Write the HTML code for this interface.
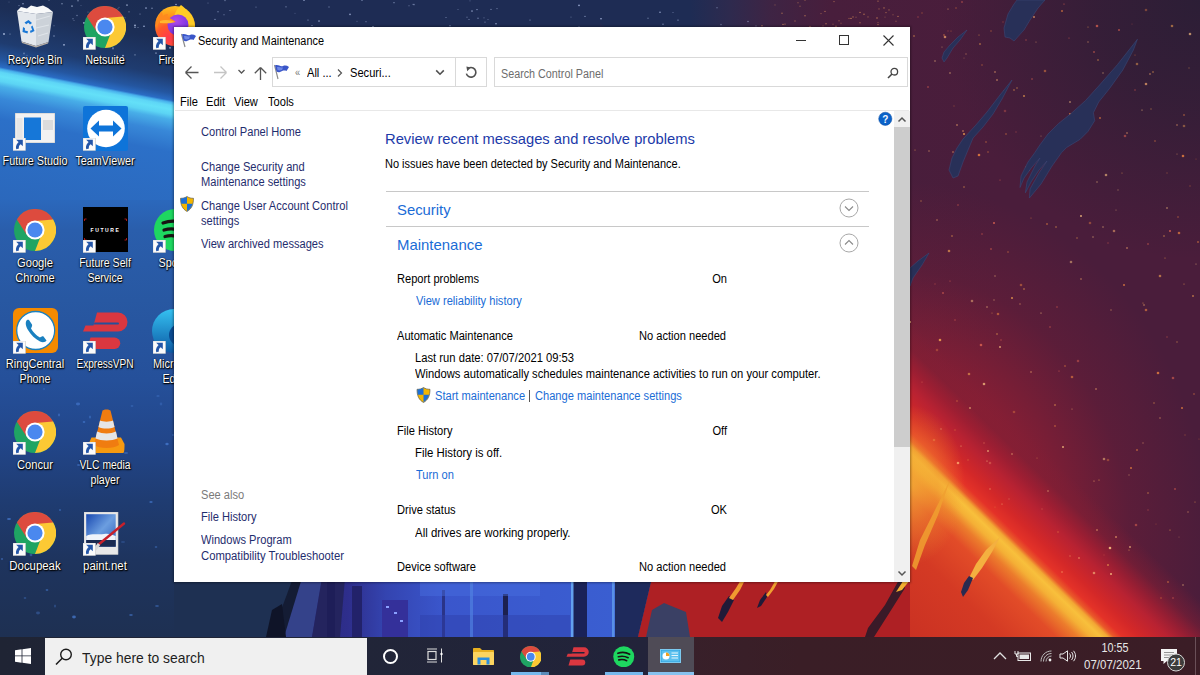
<!DOCTYPE html>
<html><head><meta charset="utf-8">
<style>
*{margin:0;padding:0;box-sizing:border-box}
html,body{width:1200px;height:675px;overflow:hidden}
body{position:relative;font-family:"Liberation Sans",sans-serif;font-size:12px;background:#1e2f55}
.a{position:absolute}
.t{position:absolute;white-space:nowrap;line-height:1}
/* wallpaper */
#wp{position:absolute;left:0;top:0;width:1200px;height:675px;overflow:hidden}
/* desktop labels */
.lbl{position:absolute;color:#fff;text-align:center;width:76px;line-height:16px;font-size:12px;text-shadow:0 0 2px #000,1px 1px 1px #000}
/* window */
#win{position:absolute;left:174px;top:27px;width:736px;height:555px;background:#fff;box-shadow:0 0 2px 1px rgba(0,0,0,.35)}
</style></head><body>
<div id="wp">
  <div class="a" style="left:0;top:0;width:1200px;height:637px;background:linear-gradient(90deg,#1e2c54 0,#1e2c54 690px,#2e2a4e 730px,#3e2444 770px,#481e3c 830px,#4a1d3b 1000px,#4a1d3b 1200px)"></div>
  <div class="a" style="left:0;top:0;width:1200px;height:637px;background:radial-gradient(circle 260px at 1200px 0,#2c1e36 0,rgba(44,30,54,.7) 40%,rgba(44,30,54,0) 100%)"></div>
  <div class="a" style="left:600px;top:0;width:600px;height:637px;background:radial-gradient(ellipse 320px 360px at 290px 540px,rgba(205,34,44,.85) 0,rgba(190,32,46,.55) 45%,rgba(160,30,50,.2) 75%,rgba(160,30,50,0) 100%)"></div>
  <div class="a" style="left:600px;top:0;width:600px;height:637px;background:linear-gradient(224deg,rgba(74,29,59,0) 0,rgba(74,29,59,0) 432px,rgba(130,30,52,.55) 452px,rgba(160,30,50,.85) 466px,#b82232 480px,#d42828 500px,#e43228 512px,#ea5a2a 518px,#f2a834 522px,#f8c03c 527px,#f4b036 534px,#ec7c2c 543px,#e24c28 558px,#d43a24 595px,#c42c22 700px,#b82420 875px)"></div>
  <div class="a" style="left:860px;top:400px;width:140px;height:200px;background:radial-gradient(ellipse 55px 80px at 50px 85px,rgba(246,184,56,.75) 0,rgba(240,150,48,.45) 50%,rgba(230,110,40,0) 100%)"></div>
  <!-- left blue column -->
  <div class="a" style="left:0;top:0;width:174px;height:637px;background:linear-gradient(180deg,#1b2c52 0,#2b68bc 200px,#2a5eac 230px,#2858a2 300px,#25509a 380px,#22468a 440px,#1f3c72 500px,#1e345e 560px,#1e3052 637px)"></div>
  <div class="a" style="left:0;top:0;width:174px;height:200px;background:linear-gradient(191deg,#1b2c52 0,#1c2e56 40px,#1f3c70 75px,#2456a0 92px,#2a6cc4 99px,#48b0ec 101px,#5ed6f6 104px,#64e0f8 108px,#5cd4f4 113px,#48aee8 118px,#3888d8 130px,#2c70c8 150px,#2b68bc 229px)"></div>
  <!-- stars -->
  <svg class="a" style="left:0;top:0" width="1200" height="637" viewBox="0 0 1200 637"><circle cx="1004" cy="91" r="0.6" fill="#f0a050" opacity="0.80"/><circle cx="937" cy="350" r="1.3" fill="#e88040" opacity="0.37"/><circle cx="1036" cy="42" r="0.6" fill="#ffb070" opacity="0.58"/><circle cx="1150" cy="74" r="0.7" fill="#ffb070" opacity="0.87"/><circle cx="1077" cy="238" r="0.7" fill="#f0a050" opacity="0.66"/><circle cx="949" cy="251" r="1.3" fill="#f0a050" opacity="0.66"/><circle cx="1072" cy="409" r="0.6" fill="#ffb070" opacity="0.66"/><circle cx="964" cy="58" r="0.6" fill="#ffb070" opacity="0.38"/><circle cx="970" cy="408" r="1.0" fill="#f8c080" opacity="0.61"/><circle cx="1178" cy="217" r="0.7" fill="#e88040" opacity="0.73"/><circle cx="981" cy="345" r="1.3" fill="#d86050" opacity="0.83"/><circle cx="1122" cy="173" r="0.6" fill="#f0a050" opacity="0.63"/><circle cx="958" cy="205" r="1.0" fill="#d86050" opacity="0.37"/><circle cx="1104" cy="459" r="1.3" fill="#f8c080" opacity="0.54"/><circle cx="1012" cy="298" r="1.0" fill="#f0a050" opacity="0.81"/><circle cx="1184" cy="284" r="0.6" fill="#f0a050" opacity="0.75"/><circle cx="1000" cy="347" r="1.0" fill="#f8c080" opacity="0.74"/><circle cx="1167" cy="208" r="1.0" fill="#f8c080" opacity="0.44"/><circle cx="944" cy="35" r="0.8" fill="#e88040" opacity="0.76"/><circle cx="1026" cy="167" r="0.7" fill="#d86050" opacity="0.83"/><circle cx="991" cy="249" r="0.8" fill="#d86050" opacity="0.88"/><circle cx="954" cy="106" r="0.7" fill="#e88040" opacity="0.36"/><circle cx="1151" cy="109" r="0.8" fill="#f0a050" opacity="0.43"/><circle cx="1065" cy="366" r="0.8" fill="#e88040" opacity="0.73"/><circle cx="1059" cy="371" r="0.6" fill="#d86050" opacity="0.84"/><circle cx="1136" cy="525" r="1.3" fill="#d86050" opacity="0.57"/><circle cx="1024" cy="289" r="1.0" fill="#f0a050" opacity="0.45"/><circle cx="1196" cy="264" r="0.6" fill="#f8c080" opacity="0.68"/><circle cx="940" cy="340" r="1.3" fill="#f0a050" opacity="0.87"/><circle cx="1088" cy="42" r="0.7" fill="#ffb070" opacity="0.56"/><circle cx="1094" cy="573" r="1.3" fill="#f8c080" opacity="0.61"/><circle cx="943" cy="293" r="1.0" fill="#d86050" opacity="0.62"/><circle cx="935" cy="61" r="0.8" fill="#f8c080" opacity="0.61"/><circle cx="1111" cy="310" r="0.7" fill="#ffb070" opacity="0.55"/><circle cx="1110" cy="548" r="1.3" fill="#f8c080" opacity="0.89"/><circle cx="1160" cy="418" r="0.8" fill="#ffb070" opacity="0.55"/><circle cx="958" cy="463" r="1.3" fill="#ffb070" opacity="0.78"/><circle cx="1006" cy="134" r="0.7" fill="#e88040" opacity="0.80"/><circle cx="1125" cy="136" r="1.3" fill="#d86050" opacity="0.55"/><circle cx="918" cy="17" r="0.8" fill="#d86050" opacity="0.49"/><circle cx="1111" cy="574" r="1.0" fill="#f8c080" opacity="0.88"/><circle cx="1016" cy="132" r="0.7" fill="#d86050" opacity="0.46"/><circle cx="969" cy="374" r="1.3" fill="#f0a050" opacity="0.61"/><circle cx="1099" cy="480" r="0.6" fill="#f0a050" opacity="0.85"/><circle cx="1137" cy="450" r="1.0" fill="#e88040" opacity="0.59"/><circle cx="1094" cy="52" r="1.0" fill="#d86050" opacity="0.57"/><circle cx="1185" cy="435" r="0.7" fill="#e88040" opacity="0.37"/><circle cx="1081" cy="279" r="0.7" fill="#ffb070" opacity="0.80"/><circle cx="1194" cy="394" r="0.8" fill="#e88040" opacity="0.65"/><circle cx="948" cy="9" r="0.6" fill="#ffb070" opacity="0.76"/><circle cx="972" cy="301" r="1.3" fill="#f8c080" opacity="0.49"/><circle cx="1032" cy="79" r="0.8" fill="#d86050" opacity="0.71"/><circle cx="1146" cy="310" r="1.3" fill="#e88040" opacity="0.64"/><circle cx="1062" cy="11" r="1.0" fill="#e88040" opacity="0.68"/><circle cx="1135" cy="90" r="0.7" fill="#d86050" opacity="0.69"/><circle cx="945" cy="37" r="1.3" fill="#ffb070" opacity="0.66"/><circle cx="1137" cy="64" r="1.3" fill="#f0a050" opacity="0.49"/><circle cx="990" cy="463" r="1.3" fill="#d86050" opacity="0.66"/><circle cx="1130" cy="547" r="1.0" fill="#f8c080" opacity="0.69"/><circle cx="1057" cy="307" r="0.8" fill="#d86050" opacity="0.63"/><circle cx="1144" cy="305" r="0.7" fill="#ffb070" opacity="0.83"/><circle cx="1183" cy="156" r="1.3" fill="#e88040" opacity="0.81"/><circle cx="950" cy="73" r="1.0" fill="#f8c080" opacity="0.39"/><circle cx="980" cy="44" r="0.8" fill="#f0a050" opacity="0.84"/><circle cx="955" cy="430" r="0.8" fill="#e88040" opacity="0.49"/><circle cx="950" cy="281" r="0.6" fill="#d86050" opacity="0.84"/><circle cx="957" cy="401" r="0.7" fill="#e88040" opacity="0.74"/><circle cx="1198" cy="242" r="1.0" fill="#e88040" opacity="0.55"/><circle cx="937" cy="220" r="0.8" fill="#ffb070" opacity="0.60"/><circle cx="1114" cy="231" r="1.3" fill="#ffb070" opacity="0.51"/><circle cx="1189" cy="68" r="0.7" fill="#f0a050" opacity="0.40"/><circle cx="1148" cy="510" r="0.8" fill="#d86050" opacity="0.43"/><circle cx="1177" cy="342" r="0.8" fill="#f0a050" opacity="0.50"/><circle cx="1142" cy="110" r="0.6" fill="#f8c080" opacity="0.87"/><circle cx="1094" cy="481" r="0.6" fill="#ffb070" opacity="0.82"/><circle cx="1070" cy="556" r="0.8" fill="#ffb070" opacity="0.42"/><circle cx="1063" cy="143" r="0.6" fill="#e88040" opacity="0.49"/><circle cx="994" cy="300" r="0.7" fill="#f8c080" opacity="0.54"/><circle cx="915" cy="150" r="0.6" fill="#f0a050" opacity="0.75"/><circle cx="1070" cy="114" r="1.0" fill="#e88040" opacity="0.86"/><circle cx="1168" cy="582" r="0.8" fill="#e88040" opacity="0.89"/><circle cx="1009" cy="499" r="0.7" fill="#d86050" opacity="0.89"/><circle cx="1195" cy="502" r="0.6" fill="#f0a050" opacity="0.69"/><circle cx="1165" cy="258" r="0.6" fill="#f0a050" opacity="0.72"/><circle cx="1020" cy="304" r="0.8" fill="#ffb070" opacity="0.48"/><circle cx="995" cy="276" r="0.7" fill="#f8c080" opacity="0.60"/><circle cx="1190" cy="186" r="0.8" fill="#e88040" opacity="0.35"/><circle cx="1021" cy="285" r="1.3" fill="#e88040" opacity="0.49"/><circle cx="1135" cy="55" r="0.6" fill="#e88040" opacity="0.57"/><circle cx="922" cy="13" r="0.8" fill="#e88040" opacity="0.40"/><circle cx="1188" cy="512" r="0.7" fill="#ffb070" opacity="0.56"/><circle cx="1097" cy="26" r="1.3" fill="#d86050" opacity="0.75"/><circle cx="1146" cy="84" r="1.3" fill="#ffb070" opacity="0.66"/><circle cx="1146" cy="10" r="1.3" fill="#e88040" opacity="0.40"/><circle cx="922" cy="382" r="0.6" fill="#d86050" opacity="0.81"/><circle cx="1072" cy="377" r="1.3" fill="#e88040" opacity="0.62"/><circle cx="1063" cy="447" r="1.0" fill="#f8c080" opacity="0.80"/><circle cx="1155" cy="141" r="0.7" fill="#e88040" opacity="0.76"/><circle cx="1193" cy="296" r="1.0" fill="#f0a050" opacity="0.61"/><circle cx="1108" cy="460" r="1.3" fill="#e88040" opacity="0.39"/><circle cx="953" cy="152" r="0.8" fill="#ffb070" opacity="0.66"/><circle cx="914" cy="36" r="0.8" fill="#f0a050" opacity="0.73"/><circle cx="1106" cy="175" r="1.3" fill="#f8c080" opacity="0.61"/><circle cx="1045" cy="71" r="1.3" fill="#e88040" opacity="0.52"/><circle cx="935" cy="284" r="0.8" fill="#d86050" opacity="0.39"/><circle cx="1184" cy="126" r="1.3" fill="#f0a050" opacity="0.43"/><circle cx="1062" cy="572" r="0.7" fill="#ffb070" opacity="0.80"/><circle cx="1058" cy="532" r="0.8" fill="#e88040" opacity="0.62"/><circle cx="1164" cy="236" r="0.7" fill="#f0a050" opacity="0.87"/><circle cx="1108" cy="243" r="0.7" fill="#d86050" opacity="0.54"/><circle cx="1002" cy="504" r="0.6" fill="#f8c080" opacity="0.76"/><circle cx="1153" cy="72" r="0.7" fill="#f0a050" opacity="0.85"/><circle cx="994" cy="223" r="1.0" fill="#d86050" opacity="0.90"/><circle cx="1081" cy="216" r="1.0" fill="#f8c080" opacity="0.82"/><circle cx="991" cy="31" r="0.8" fill="#e88040" opacity="0.49"/><circle cx="987" cy="307" r="0.7" fill="#f8c080" opacity="0.78"/><circle cx="1034" cy="17" r="1.0" fill="#ffb070" opacity="0.65"/><circle cx="1119" cy="30" r="1.0" fill="#d86050" opacity="0.69"/><circle cx="1070" cy="102" r="1.0" fill="#f8c080" opacity="0.50"/><circle cx="984" cy="443" r="0.8" fill="#d86050" opacity="0.71"/><circle cx="997" cy="334" r="1.0" fill="#f0a050" opacity="0.44"/><circle cx="957" cy="125" r="1.0" fill="#ffb070" opacity="0.47"/><circle cx="1173" cy="598" r="1.0" fill="#d86050" opacity="0.43"/><circle cx="966" cy="54" r="0.8" fill="#ffb070" opacity="0.40"/><circle cx="979" cy="155" r="1.3" fill="#e88040" opacity="0.84"/><circle cx="1127" cy="248" r="1.0" fill="#ffb070" opacity="0.47"/><circle cx="988" cy="451" r="1.0" fill="#f8c080" opacity="0.67"/><circle cx="1014" cy="412" r="1.3" fill="#e88040" opacity="0.40"/><circle cx="1170" cy="231" r="1.0" fill="#d86050" opacity="0.87"/><circle cx="1156" cy="524" r="0.6" fill="#e88040" opacity="0.37"/><circle cx="1116" cy="537" r="1.0" fill="#ffb070" opacity="0.62"/><circle cx="982" cy="65" r="0.7" fill="#e88040" opacity="0.64"/><circle cx="1108" cy="565" r="1.0" fill="#f0a050" opacity="0.65"/><circle cx="1097" cy="182" r="0.7" fill="#f8c080" opacity="0.64"/><circle cx="1037" cy="458" r="0.6" fill="#f0a050" opacity="0.52"/><circle cx="1184" cy="115" r="0.8" fill="#e88040" opacity="0.78"/><circle cx="910" cy="322" r="1.0" fill="#f8c080" opacity="0.88"/><circle cx="1097" cy="530" r="1.0" fill="#ffb070" opacity="0.48"/><circle cx="1055" cy="405" r="1.0" fill="#f0a050" opacity="0.49"/><circle cx="1104" cy="555" r="0.7" fill="#d86050" opacity="0.37"/><circle cx="1008" cy="252" r="1.0" fill="#e88040" opacity="0.35"/><circle cx="995" cy="507" r="0.6" fill="#e88040" opacity="0.62"/><circle cx="968" cy="460" r="0.7" fill="#e88040" opacity="0.61"/><circle cx="964" cy="134" r="1.0" fill="#f0a050" opacity="0.87"/><circle cx="952" cy="236" r="0.7" fill="#f0a050" opacity="0.89"/><circle cx="951" cy="31" r="0.6" fill="#e88040" opacity="0.57"/><circle cx="1170" cy="530" r="0.6" fill="#f0a050" opacity="0.86"/><circle cx="1005" cy="111" r="1.3" fill="#d86050" opacity="0.37"/><circle cx="1103" cy="227" r="0.8" fill="#f8c080" opacity="0.59"/><circle cx="942" cy="47" r="0.6" fill="#f8c080" opacity="0.58"/><circle cx="1167" cy="337" r="0.7" fill="#d86050" opacity="0.55"/><circle cx="1148" cy="493" r="1.0" fill="#f0a050" opacity="0.38"/><circle cx="1047" cy="224" r="1.0" fill="#e88040" opacity="0.53"/><circle cx="1124" cy="285" r="1.0" fill="#e88040" opacity="0.80"/><circle cx="1132" cy="24" r="0.6" fill="#d86050" opacity="0.38"/><circle cx="1177" cy="154" r="0.6" fill="#ffb070" opacity="0.54"/><circle cx="1118" cy="190" r="0.8" fill="#f8c080" opacity="0.35"/><circle cx="1129" cy="550" r="0.6" fill="#f0a050" opacity="0.80"/><circle cx="941" cy="429" r="1.0" fill="#d86050" opacity="0.78"/><circle cx="1175" cy="489" r="0.7" fill="#d86050" opacity="0.45"/><circle cx="1143" cy="443" r="0.7" fill="#ffb070" opacity="0.48"/><circle cx="1160" cy="276" r="1.3" fill="#f0a050" opacity="0.63"/><circle cx="1024" cy="96" r="1.0" fill="#f0a050" opacity="0.71"/><circle cx="1050" cy="327" r="0.7" fill="#d86050" opacity="0.84"/><circle cx="1196" cy="159" r="0.6" fill="#e88040" opacity="0.40"/><circle cx="1055" cy="426" r="1.0" fill="#e88040" opacity="0.48"/><circle cx="1031" cy="372" r="0.7" fill="#ffb070" opacity="0.82"/><circle cx="1103" cy="73" r="0.8" fill="#f8c080" opacity="0.50"/><circle cx="988" cy="152" r="0.8" fill="#e88040" opacity="0.59"/><circle cx="964" cy="141" r="0.8" fill="#ffb070" opacity="0.45"/><circle cx="929" cy="151" r="0.7" fill="#ffb070" opacity="0.64"/><circle cx="1098" cy="60" r="1.0" fill="#f0a050" opacity="0.41"/><circle cx="1048" cy="491" r="1.0" fill="#f8c080" opacity="0.37"/><circle cx="995" cy="72" r="0.7" fill="#ffb070" opacity="0.89"/><circle cx="1079" cy="558" r="0.8" fill="#ffb070" opacity="0.83"/><circle cx="1040" cy="156" r="0.6" fill="#f0a050" opacity="0.70"/><circle cx="1116" cy="210" r="0.6" fill="#f8c080" opacity="0.54"/><circle cx="1175" cy="489" r="0.8" fill="#d86050" opacity="0.72"/><circle cx="964" cy="187" r="0.7" fill="#f0a050" opacity="0.79"/><circle cx="1069" cy="38" r="0.6" fill="#d86050" opacity="0.72"/><circle cx="955" cy="320" r="0.7" fill="#d86050" opacity="0.73"/><circle cx="1029" cy="170" r="0.8" fill="#d86050" opacity="0.87"/><circle cx="1001" cy="340" r="0.8" fill="#d86050" opacity="0.58"/><circle cx="1161" cy="598" r="0.8" fill="#e88040" opacity="0.56"/><circle cx="1148" cy="244" r="0.8" fill="#d86050" opacity="0.78"/><circle cx="948" cy="31" r="0.7" fill="#d86050" opacity="0.40"/><circle cx="1090" cy="223" r="1.3" fill="#e88040" opacity="0.43"/><circle cx="992" cy="313" r="0.6" fill="#f0a050" opacity="0.56"/><circle cx="1129" cy="475" r="0.7" fill="#f8c080" opacity="0.42"/><circle cx="1183" cy="585" r="1.0" fill="#f8c080" opacity="0.38"/><circle cx="1179" cy="233" r="1.3" fill="#e88040" opacity="0.70"/><circle cx="1158" cy="373" r="1.3" fill="#e88040" opacity="0.81"/><circle cx="963" cy="131" r="1.0" fill="#ffb070" opacity="0.44"/><circle cx="1014" cy="90" r="0.7" fill="#f0a050" opacity="0.84"/><circle cx="1154" cy="403" r="0.8" fill="#f0a050" opacity="0.56"/><circle cx="1042" cy="509" r="0.8" fill="#d86050" opacity="0.52"/><circle cx="982" cy="234" r="0.8" fill="#d86050" opacity="0.63"/><circle cx="962" cy="2" r="1.0" fill="#d86050" opacity="0.48"/><circle cx="1131" cy="468" r="1.0" fill="#e88040" opacity="0.80"/><circle cx="1026" cy="40" r="0.8" fill="#d86050" opacity="0.55"/><circle cx="1143" cy="303" r="0.6" fill="#f0a050" opacity="0.70"/><circle cx="934" cy="440" r="1.3" fill="#f0a050" opacity="0.38"/><circle cx="1056" cy="227" r="0.7" fill="#f0a050" opacity="0.82"/><circle cx="1199" cy="439" r="0.6" fill="#e88040" opacity="0.42"/><circle cx="1167" cy="173" r="0.7" fill="#e88040" opacity="0.39"/><circle cx="1012" cy="454" r="0.7" fill="#f8c080" opacity="0.84"/><circle cx="990" cy="489" r="0.7" fill="#f8c080" opacity="0.63"/><circle cx="1177" cy="125" r="0.8" fill="#ffb070" opacity="0.63"/><circle cx="1003" cy="22" r="0.7" fill="#d86050" opacity="0.44"/><circle cx="1182" cy="408" r="1.0" fill="#e88040" opacity="0.79"/><circle cx="987" cy="461" r="0.6" fill="#f8c080" opacity="0.88"/><circle cx="1041" cy="313" r="0.6" fill="#f8c080" opacity="0.90"/><circle cx="1093" cy="237" r="0.8" fill="#f8c080" opacity="0.56"/><circle cx="1017" cy="88" r="0.8" fill="#f0a050" opacity="0.59"/><circle cx="961" cy="446" r="0.6" fill="#f8c080" opacity="0.80"/><circle cx="984" cy="384" r="1.3" fill="#f8c080" opacity="0.75"/><circle cx="1127" cy="133" r="0.8" fill="#ffb070" opacity="0.69"/><circle cx="1031" cy="218" r="0.6" fill="#e88040" opacity="0.62"/><circle cx="1088" cy="27" r="0.6" fill="#f0a050" opacity="0.66"/><circle cx="998" cy="314" r="1.3" fill="#e88040" opacity="0.58"/><circle cx="997" cy="80" r="0.8" fill="#ffb070" opacity="0.81"/><circle cx="956" cy="8" r="0.7" fill="#e88040" opacity="0.60"/><circle cx="928" cy="87" r="0.8" fill="#d86050" opacity="0.80"/><circle cx="1190" cy="34" r="1.3" fill="#f8c080" opacity="0.68"/><circle cx="1078" cy="361" r="1.3" fill="#d86050" opacity="0.49"/><circle cx="1172" cy="26" r="1.3" fill="#f0a050" opacity="0.57"/><circle cx="979" cy="35" r="0.6" fill="#f0a050" opacity="0.69"/><circle cx="1100" cy="118" r="1.0" fill="#e88040" opacity="0.64"/><circle cx="1096" cy="389" r="1.0" fill="#ffb070" opacity="0.45"/><circle cx="1000" cy="180" r="0.6" fill="#d86050" opacity="0.74"/><circle cx="1041" cy="136" r="0.6" fill="#f8c080" opacity="0.48"/><circle cx="921" cy="201" r="0.8" fill="#f0a050" opacity="0.50"/><circle cx="1071" cy="262" r="1.3" fill="#f8c080" opacity="0.51"/><circle cx="1179" cy="537" r="0.6" fill="#ffb070" opacity="0.36"/><circle cx="986" cy="142" r="0.7" fill="#e88040" opacity="0.76"/><circle cx="1173" cy="378" r="1.3" fill="#d86050" opacity="0.61"/><circle cx="1064" cy="4" r="0.6" fill="#d86050" opacity="0.88"/><circle cx="23" cy="3.7" r="0.8" fill="#c8d8ff" opacity="0.62"/><circle cx="530" cy="19.9" r="0.5" fill="#c8d8ff" opacity="0.73"/><circle cx="579" cy="5.4" r="0.8" fill="#c8d8ff" opacity="0.75"/><circle cx="50" cy="23.4" r="0.8" fill="#c8d8ff" opacity="0.77"/><circle cx="81" cy="5.6" r="0.5" fill="#c8d8ff" opacity="0.32"/><circle cx="721" cy="24.6" r="0.8" fill="#c8d8ff" opacity="0.34"/><circle cx="571" cy="17.1" r="0.6" fill="#c8d8ff" opacity="0.35"/><circle cx="74" cy="20.4" r="0.5" fill="#c8d8ff" opacity="0.45"/><circle cx="256" cy="7.1" r="0.6" fill="#c8d8ff" opacity="0.43"/><circle cx="215" cy="19.3" r="0.6" fill="#c8d8ff" opacity="0.76"/><circle cx="585" cy="16.3" r="0.6" fill="#c8d8ff" opacity="0.73"/><circle cx="470" cy="0.8" r="0.6" fill="#c8d8ff" opacity="0.32"/><circle cx="394" cy="2.7" r="0.6" fill="#c8d8ff" opacity="0.65"/><circle cx="409" cy="5.8" r="0.5" fill="#c8d8ff" opacity="0.59"/><circle cx="218" cy="11.8" r="0.8" fill="#c8d8ff" opacity="0.40"/><circle cx="579" cy="26.4" r="0.5" fill="#c8d8ff" opacity="0.47"/><circle cx="73" cy="18.8" r="0.5" fill="#c8d8ff" opacity="0.78"/><circle cx="450" cy="25.8" r="0.8" fill="#c8d8ff" opacity="0.43"/><circle cx="717" cy="7.7" r="0.5" fill="#c8d8ff" opacity="0.77"/><circle cx="176" cy="4.5" r="0.8" fill="#c8d8ff" opacity="0.68"/><circle cx="373" cy="26.8" r="0.8" fill="#c8d8ff" opacity="0.69"/><circle cx="477" cy="9.6" r="0.6" fill="#c8d8ff" opacity="0.76"/><circle cx="678" cy="20.1" r="0.6" fill="#c8d8ff" opacity="0.74"/><circle cx="19" cy="5.6" r="0.6" fill="#c8d8ff" opacity="0.51"/><circle cx="414" cy="4.6" r="0.8" fill="#c8d8ff" opacity="0.42"/><circle cx="350" cy="14.4" r="0.8" fill="#c8d8ff" opacity="0.68"/><circle cx="491" cy="9.4" r="0.6" fill="#c8d8ff" opacity="0.56"/><circle cx="660" cy="12.2" r="0.8" fill="#c8d8ff" opacity="0.67"/><circle cx="129" cy="11.8" r="0.6" fill="#c8d8ff" opacity="0.59"/><circle cx="96" cy="12.5" r="0.8" fill="#c8d8ff" opacity="0.42"/><circle cx="146" cy="8.1" r="0.8" fill="#c8d8ff" opacity="0.71"/><circle cx="469" cy="19.5" r="0.5" fill="#c8d8ff" opacity="0.66"/><circle cx="458" cy="9.4" r="0.5" fill="#c8d8ff" opacity="0.46"/><circle cx="144" cy="26.3" r="0.8" fill="#c8d8ff" opacity="0.80"/><circle cx="125" cy="17.8" r="0.5" fill="#c8d8ff" opacity="0.49"/><circle cx="748" cy="21.5" r="0.8" fill="#c8d8ff" opacity="0.45"/><circle cx="208" cy="3.0" r="0.5" fill="#c8d8ff" opacity="0.44"/><circle cx="673" cy="12.5" r="0.5" fill="#c8d8ff" opacity="0.50"/><circle cx="601" cy="18.7" r="0.8" fill="#c8d8ff" opacity="0.79"/><circle cx="225" cy="0.6" r="0.6" fill="#c8d8ff" opacity="0.60"/><circle cx="308" cy="20.0" r="0.6" fill="#c8d8ff" opacity="0.65"/><circle cx="446" cy="17.5" r="0.5" fill="#c8d8ff" opacity="0.63"/><circle cx="496" cy="23.7" r="0.8" fill="#c8d8ff" opacity="0.65"/><circle cx="648" cy="18.3" r="0.8" fill="#c8d8ff" opacity="0.36"/><circle cx="329" cy="7.0" r="0.8" fill="#c8d8ff" opacity="0.35"/><circle cx="319" cy="21.1" r="0.8" fill="#c8d8ff" opacity="0.66"/><circle cx="119" cy="22.9" r="0.6" fill="#c8d8ff" opacity="0.53"/><circle cx="472" cy="11.1" r="0.8" fill="#c8d8ff" opacity="0.63"/><circle cx="663" cy="24.2" r="0.6" fill="#c8d8ff" opacity="0.69"/><circle cx="295" cy="13.2" r="0.5" fill="#c8d8ff" opacity="0.32"/><circle cx="413" cy="4.3" r="0.5" fill="#c8d8ff" opacity="0.56"/><circle cx="77" cy="15.5" r="0.8" fill="#c8d8ff" opacity="0.40"/><circle cx="362" cy="0.4" r="0.6" fill="#c8d8ff" opacity="0.56"/><circle cx="312" cy="25.6" r="0.5" fill="#c8d8ff" opacity="0.80"/><circle cx="140" cy="13.9" r="0.5" fill="#c8d8ff" opacity="0.66"/><circle cx="467" cy="17.2" r="0.6" fill="#c8d8ff" opacity="0.44"/><circle cx="304" cy="0.4" r="0.6" fill="#c8d8ff" opacity="0.76"/><circle cx="478" cy="18.2" r="0.8" fill="#c8d8ff" opacity="0.43"/><circle cx="171" cy="20.0" r="0.8" fill="#c8d8ff" opacity="0.79"/><circle cx="756" cy="25.9" r="0.6" fill="#c8d8ff" opacity="0.41"/><circle cx="98" cy="21.0" r="0.8" fill="#c8d8ff" opacity="0.40"/><circle cx="488" cy="19.5" r="0.5" fill="#c8d8ff" opacity="0.48"/><circle cx="485" cy="22.1" r="0.6" fill="#c8d8ff" opacity="0.53"/><circle cx="224" cy="14.8" r="0.5" fill="#c8d8ff" opacity="0.69"/><circle cx="357" cy="21.2" r="0.5" fill="#c8d8ff" opacity="0.43"/><circle cx="286" cy="6.8" r="0.6" fill="#c8d8ff" opacity="0.64"/><circle cx="366" cy="21.7" r="0.6" fill="#c8d8ff" opacity="0.48"/><circle cx="497" cy="8.6" r="0.6" fill="#c8d8ff" opacity="0.51"/><circle cx="484" cy="17.8" r="0.6" fill="#c8d8ff" opacity="0.38"/><circle cx="230" cy="10.4" r="0.5" fill="#c8d8ff" opacity="0.71"/><circle cx="896" cy="21.2" r="0.7" fill="#f0a060" opacity="0.37"/><circle cx="885" cy="17.1" r="0.7" fill="#f0a060" opacity="0.31"/><circle cx="762" cy="25.7" r="0.7" fill="#f0a060" opacity="0.63"/><circle cx="798" cy="2.7" r="0.7" fill="#f0a060" opacity="0.37"/><circle cx="795" cy="21.0" r="0.7" fill="#f0a060" opacity="0.47"/><circle cx="783" cy="24.4" r="0.7" fill="#f0a060" opacity="0.70"/><circle cx="785" cy="24.1" r="0.7" fill="#f0a060" opacity="0.60"/><circle cx="877" cy="18.0" r="0.7" fill="#f0a060" opacity="0.75"/><circle cx="878" cy="22.6" r="0.7" fill="#f0a060" opacity="0.40"/><circle cx="864" cy="14.3" r="0.7" fill="#f0a060" opacity="0.67"/><circle cx="826" cy="23.8" r="0.7" fill="#f0a060" opacity="0.58"/><circle cx="800" cy="6.3" r="0.7" fill="#f0a060" opacity="0.37"/><circle cx="834" cy="1.6" r="0.7" fill="#f0a060" opacity="0.53"/><circle cx="782" cy="13.3" r="0.7" fill="#f0a060" opacity="0.55"/><circle cx="841" cy="23.3" r="0.7" fill="#f0a060" opacity="0.30"/><circle cx="886" cy="12.6" r="0.7" fill="#f0a060" opacity="0.58"/><circle cx="860" cy="22.7" r="0.7" fill="#f0a060" opacity="0.49"/><circle cx="823" cy="25.9" r="0.7" fill="#f0a060" opacity="0.34"/><circle cx="856" cy="17.2" r="0.7" fill="#f0a060" opacity="0.31"/><circle cx="851" cy="18.4" r="0.7" fill="#f0a060" opacity="0.77"/><circle cx="810" cy="26.5" r="0.7" fill="#f0a060" opacity="0.56"/><circle cx="833" cy="24.2" r="0.7" fill="#f0a060" opacity="0.32"/><circle cx="868" cy="16.9" r="0.7" fill="#f0a060" opacity="0.47"/><circle cx="889" cy="9.9" r="0.7" fill="#f0a060" opacity="0.54"/><circle cx="839" cy="20.8" r="0.7" fill="#f0a060" opacity="0.41"/><circle cx="825" cy="11.4" r="0.7" fill="#f0a060" opacity="0.58"/><circle cx="884" cy="7.9" r="0.7" fill="#f0a060" opacity="0.71"/><circle cx="821" cy="13.6" r="0.7" fill="#f0a060" opacity="0.44"/><circle cx="836" cy="26.3" r="0.7" fill="#f0a060" opacity="0.63"/><circle cx="879" cy="8.9" r="0.7" fill="#f0a060" opacity="0.46"/><circle cx="805" cy="15.8" r="0.7" fill="#f0a060" opacity="0.62"/><circle cx="878" cy="1.1" r="0.7" fill="#f0a060" opacity="0.66"/><circle cx="893" cy="14.7" r="0.7" fill="#f0a060" opacity="0.32"/><circle cx="805" cy="0.2" r="0.7" fill="#f0a060" opacity="0.39"/><circle cx="898" cy="16.4" r="0.7" fill="#f0a060" opacity="0.63"/><circle cx="878" cy="24.6" r="0.7" fill="#f0a060" opacity="0.61"/><circle cx="853" cy="16.9" r="0.7" fill="#f0a060" opacity="0.65"/><circle cx="849" cy="18.4" r="0.7" fill="#f0a060" opacity="0.41"/><circle cx="860" cy="12.4" r="0.7" fill="#f0a060" opacity="0.68"/><circle cx="775" cy="4.9" r="0.7" fill="#f0a060" opacity="0.32"/><circle cx="135" cy="54.8" r="0.9" fill="#d0e0ff" opacity="0.31"/><circle cx="152" cy="8.3" r="0.7" fill="#d0e0ff" opacity="0.58"/><circle cx="45" cy="18.1" r="0.7" fill="#d0e0ff" opacity="0.32"/><circle cx="4" cy="34.0" r="0.9" fill="#d0e0ff" opacity="0.77"/><circle cx="10" cy="34.1" r="0.5" fill="#d0e0ff" opacity="0.71"/><circle cx="135" cy="25.3" r="0.9" fill="#d0e0ff" opacity="0.76"/><circle cx="78" cy="0.8" r="0.7" fill="#d0e0ff" opacity="0.60"/><circle cx="173" cy="39.6" r="0.5" fill="#d0e0ff" opacity="0.54"/><circle cx="72" cy="6.1" r="0.9" fill="#d0e0ff" opacity="0.54"/><circle cx="156" cy="37.6" r="0.7" fill="#d0e0ff" opacity="0.30"/><circle cx="119" cy="7.3" r="0.5" fill="#d0e0ff" opacity="0.41"/><circle cx="21" cy="28.3" r="0.7" fill="#d0e0ff" opacity="0.66"/><circle cx="42" cy="44.0" r="0.5" fill="#d0e0ff" opacity="0.76"/><circle cx="64" cy="44.8" r="0.9" fill="#d0e0ff" opacity="0.73"/><circle cx="127" cy="5.1" r="0.9" fill="#d0e0ff" opacity="0.58"/><circle cx="87" cy="40.2" r="0.7" fill="#d0e0ff" opacity="0.76"/><circle cx="9" cy="1.9" r="0.5" fill="#d0e0ff" opacity="0.31"/><circle cx="113" cy="49.0" r="0.5" fill="#d0e0ff" opacity="0.49"/><circle cx="54" cy="36.0" r="0.7" fill="#d0e0ff" opacity="0.60"/><circle cx="55" cy="56.9" r="0.9" fill="#d0e0ff" opacity="0.52"/><circle cx="118" cy="8.7" r="0.5" fill="#d0e0ff" opacity="0.48"/><circle cx="112" cy="37.8" r="0.7" fill="#d0e0ff" opacity="0.54"/><circle cx="135" cy="27.2" r="0.7" fill="#d0e0ff" opacity="0.69"/><circle cx="99" cy="17.5" r="0.5" fill="#d0e0ff" opacity="0.61"/><circle cx="113" cy="48.1" r="0.9" fill="#d0e0ff" opacity="0.47"/><circle cx="105" cy="58.6" r="0.5" fill="#d0e0ff" opacity="0.60"/><circle cx="54" cy="25.7" r="0.5" fill="#d0e0ff" opacity="0.49"/><circle cx="119" cy="36.1" r="0.5" fill="#d0e0ff" opacity="0.70"/><circle cx="49" cy="0.1" r="0.7" fill="#d0e0ff" opacity="0.43"/><circle cx="27" cy="55.2" r="0.5" fill="#d0e0ff" opacity="0.44"/><circle cx="24" cy="53.4" r="0.9" fill="#d0e0ff" opacity="0.37"/><circle cx="170" cy="47.8" r="0.9" fill="#d0e0ff" opacity="0.64"/><circle cx="159" cy="20.8" r="0.5" fill="#d0e0ff" opacity="0.57"/><circle cx="84" cy="22.9" r="0.9" fill="#d0e0ff" opacity="0.77"/><circle cx="41" cy="36.4" r="0.9" fill="#d0e0ff" opacity="0.50"/><circle cx="123" cy="55.6" r="0.9" fill="#d0e0ff" opacity="0.68"/><circle cx="138" cy="27.6" r="0.5" fill="#d0e0ff" opacity="0.57"/><circle cx="62" cy="3.8" r="0.7" fill="#d0e0ff" opacity="0.59"/><circle cx="156" cy="53.1" r="0.9" fill="#d0e0ff" opacity="0.46"/><circle cx="88" cy="12.1" r="0.5" fill="#d0e0ff" opacity="0.40"/><ellipse cx="31" cy="555" rx="1.4" ry="1.2" fill="#4a80d8" opacity="0.46"/><ellipse cx="90" cy="417" rx="1.1" ry="1.5" fill="#4a80d8" opacity="0.45"/><ellipse cx="18" cy="538" rx="1.9" ry="0.9" fill="#4a80d8" opacity="0.54"/><ellipse cx="60" cy="510" rx="1.0" ry="0.8" fill="#4a80d8" opacity="0.70"/><ellipse cx="151" cy="502" rx="1.7" ry="1.0" fill="#4a80d8" opacity="0.61"/><ellipse cx="74" cy="617" rx="1.9" ry="1.4" fill="#4a80d8" opacity="0.69"/><ellipse cx="44" cy="389" rx="1.2" ry="0.9" fill="#4a80d8" opacity="0.33"/><ellipse cx="9" cy="519" rx="2.0" ry="1.1" fill="#4a80d8" opacity="0.68"/><ellipse cx="158" cy="396" rx="1.7" ry="1.1" fill="#4a80d8" opacity="0.35"/><ellipse cx="167" cy="444" rx="1.7" ry="1.2" fill="#4a80d8" opacity="0.68"/><ellipse cx="117" cy="478" rx="1.5" ry="0.9" fill="#4a80d8" opacity="0.69"/><ellipse cx="173" cy="435" rx="1.0" ry="1.0" fill="#4a80d8" opacity="0.44"/><ellipse cx="157" cy="606" rx="2.0" ry="0.8" fill="#4a80d8" opacity="0.61"/><ellipse cx="123" cy="542" rx="2.2" ry="0.8" fill="#4a80d8" opacity="0.36"/><ellipse cx="131" cy="615" rx="1.8" ry="1.0" fill="#4a80d8" opacity="0.54"/><ellipse cx="132" cy="406" rx="1.4" ry="1.0" fill="#4a80d8" opacity="0.35"/><ellipse cx="84" cy="422" rx="1.3" ry="0.9" fill="#4a80d8" opacity="0.57"/><ellipse cx="2" cy="559" rx="1.2" ry="0.8" fill="#4a80d8" opacity="0.67"/><ellipse cx="38" cy="613" rx="2.0" ry="1.4" fill="#4a80d8" opacity="0.36"/><ellipse cx="78" cy="404" rx="2.1" ry="1.4" fill="#4a80d8" opacity="0.55"/><ellipse cx="79" cy="465" rx="2.0" ry="1.1" fill="#4a80d8" opacity="0.55"/><ellipse cx="25" cy="435" rx="1.1" ry="1.3" fill="#4a80d8" opacity="0.52"/><ellipse cx="25" cy="598" rx="1.3" ry="1.1" fill="#4a80d8" opacity="0.36"/><ellipse cx="47" cy="590" rx="1.4" ry="0.9" fill="#4a80d8" opacity="0.50"/><ellipse cx="55" cy="606" rx="1.1" ry="1.5" fill="#4a80d8" opacity="0.32"/><ellipse cx="156" cy="547" rx="1.3" ry="1.1" fill="#4a80d8" opacity="0.41"/><ellipse cx="45" cy="430" rx="1.4" ry="1.5" fill="#4a80d8" opacity="0.70"/><ellipse cx="161" cy="404" rx="1.3" ry="1.4" fill="#4a80d8" opacity="0.32"/><ellipse cx="126" cy="453" rx="2.2" ry="0.8" fill="#4a80d8" opacity="0.62"/><ellipse cx="59" cy="415" rx="1.0" ry="1.4" fill="#4a80d8" opacity="0.51"/></svg>
  <svg class="a" style="left:0;top:0" width="1200" height="637" viewBox="0 0 1200 637">
    <g fill="#283058" stroke="#3a4676" stroke-width=".6">
      <path d="M1137.4 39.3 L1133.4 50 L1122.8 70 L1109.4 88.7 L1098.7 102 L1093.4 112.7 L1094.7 120.7 L1088 131.4 L1080 139.4 L1066.7 147.4 L1061.4 152.8 L1052 166 L1041 184 L1029.4 198 L1030 189 L1039 173 L1047 161 L1039 170 L1031 182 L1025.4 192.8 L1027 182 L1035 166 L1040 158 L1032 167 L1024 178 L1020 187.5 L1021 176 L1028 162 L1034.7 152.8 L1040 144.8 L1048 134 L1058.7 123.4 L1072 112.7 L1085.4 100.7 L1098.7 86 L1117.4 64.7 Z"/>
      <path d="M1012 80 L1002 99 L993 114 L983 127 L973 138 L968 150 L963 162 L958 176 L953 178 L949 170 L952 158 L957 148 L963 139 L975 126 L987 112 L1000 95 Z"/>
      <path d="M1017 0 L1045 0 L1038 8 L1030 20 L1024 30 L1014 41 L1010 38 L1005 37 L1004 28 L1008 14 L1014 4 Z"/>
      <path d="M967 30 L960 40 L953 48 L947 58 L944 62 L942 58 L944 52 L950 45 L958 37 Z"/>
      <path d="M929 253 L922 265 L913 278 L910 286 L910 268 L918 261 Z"/>
    </g>
    <g>
      <path d="M950 480 L938 515 L925 545 L916 570 L912 566 L920 540 L935 510 Z" fill="#f0a030" opacity=".85"/>
      <path d="M1000 537 L992 552 L982 568 L973 580 L969 578 L976 564 L986 550 Z" fill="#f4b040"/>
      <path d="M973 578 L968 590 L963 597 L961 592 L964 583 L969 576 Z" fill="#2a2a50"/>
    </g>
  </svg>
  <!-- bottom strip city -->
  <svg class="a" style="left:174px;top:578px" width="736" height="59" viewBox="174 578 736 59">
    <defs>
      <linearGradient id="city" x1="0" y1="0" x2="1" y2="0">
        <stop offset="0" stop-color="#262670"/><stop offset=".2" stop-color="#2e2e8c"/><stop offset=".3" stop-color="#3444b0"/><stop offset=".45" stop-color="#3a56cc"/><stop offset="1" stop-color="#3a60d2"/>
      </linearGradient>
    </defs>
    <rect x="174" y="578" width="736" height="59" fill="#1e3052"/>
    <path d="M300 578 L652 578 L638 637 L272 637 Z" fill="url(#city)"/>
    <path d="M300 578 L322 578 L312 637 L272 637 Z" fill="#34428a"/>
    <path d="M293 578 L302 578 L284 637 L271 637 Z" fill="#141c34"/>
    <path d="M272 610 L282 604 L286 637 L266 637 Z" fill="#0f1428"/>
    <path d="M322 578 L345 578 L340 637 L312 637 Z" fill="#24245e"/>
    <rect x="503" y="594" width="5" height="43" fill="#1c2050"/>
    <rect x="382" y="600" width="26" height="37" fill="#34309a"/>
    <rect x="386" y="606" width="3" height="2" fill="#8aa0ff"/><rect x="394" y="612" width="3" height="2" fill="#8aa0ff"/><rect x="400" y="620" width="3" height="2" fill="#8aa0ff"/>
    <rect x="327" y="582" width="8" height="55" fill="#1e1e58"/>
    <rect x="352" y="586" width="10" height="51" fill="#22226a"/>
    <rect x="442" y="590" width="3" height="47" fill="#2a3488"/>
    <rect x="420" y="582" width="120" height="14" fill="#4a6ee0" opacity=".45"/>
    <rect x="420" y="615" width="150" height="22" fill="#2e3ea8" opacity=".45"/>
    <rect x="470" y="582" width="3" height="55" fill="#5080e0" opacity=".7"/>
    <rect x="573" y="578" width="14" height="59" fill="#1a2258"/>
    <rect x="571" y="578" width="2.5" height="59" fill="#62a0f0"/>
    <rect x="612" y="578" width="2.5" height="59" fill="#5890e8"/>
    <path d="M615 578 L652 578 L638 637 L615 637 Z" fill="#1e2a5c"/>
    <path d="M652 578 L910 578 L910 637 L638 637 Z" fill="#ae2024"/>
    <path d="M646 637 L652 610 L664 603 L686 612 L690 637 Z" fill="#3a4064"/>
    <path d="M729 596 L722 606 L718 618 L722 622 L728 612 L734 600 Z" fill="#201a38"/>
    <path d="M742 578 L736 588 L729 598 L733 600 L740 590 L746 578 Z" fill="#f09a30"/>
    <path d="M766 592 L760 600 L757 608 L761 606 L767 597 Z" fill="#201a38"/>
    <path d="M777 578 L770 590 L766 595 L768 597 L774 589 L780 578 Z" fill="#f0a030"/>
    <path d="M900 578 L885 605 L868 628 L865 637 L874 637 L888 615 L905 588 Z" fill="#3a1a28"/>
    <path d="M905 578 L896 592 L902 590 L910 580 Z" fill="#f4b030"/>
  </svg>
</div>

<!-- DESKTOP ICONS -->
<svg width="0" height="0" style="position:absolute">
  <defs>
    <g id="chrome">
      <circle cx="21" cy="21" r="21" fill="#1fa463"/>
      <path d="M21 21 L2.8 10.5 A21 21 0 0 1 39.2 10.5 Z" fill="#dd4b3e"/>
      <path d="M21 21 L39.2 10.5 A21 21 0 0 1 21 42 Z" fill="#fcc934"/>
      <path d="M21 12 L39.2 10.5 L30 23 Z" fill="#fcc934"/>
      <path d="M12.5 25.5 L2.8 10.5 L17 17 Z" fill="#dd4b3e"/>
      <path d="M26 29 L21 42 L14 28 Z" fill="#1fa463"/>
      <circle cx="21" cy="21" r="9.6" fill="#fff"/>
      <circle cx="21" cy="21" r="7.6" fill="#4a88ef"/>
    </g>
    <g id="sc">
      <rect x="0" y="0" width="12.5" height="12.5" fill="#fbfbfb" stroke="#c8c8c8" stroke-width=".6"/>
      <path d="M3.2 1.7 L9.8 1.7 L9.8 8.3 Z" fill="#2456a8"/>
      <path d="M7.8 4.2 C5 6 3.8 8 4.6 10.8" stroke="#2456a8" stroke-width="2.8" fill="none"/>
    </g>
  </defs>
</svg>
<style>
.lb{position:absolute;width:120px;text-align:center;color:#fff;font-size:12px;line-height:12px;white-space:nowrap;text-shadow:0 0 1px #000,0 1px 2px #000,1px 1px 1px rgba(0,0,0,.8);transform-origin:50% 0}
</style>
<!-- col1 row1 recycle bin -->
<svg class="a" style="left:14px;top:3px" width="44" height="46" viewBox="14 3 44 46">
  <path d="M17 11 L36 14 L36 46 L21.5 41.5 Z" fill="#e4e8ed"/>
  <path d="M36 14 L53 12 L48.5 42 L36 46 Z" fill="#ccd2d9"/>
  <path d="M36 20 L50 16 M36 28 L49 25 M38 36 L48 33" stroke="#e8ecf0" stroke-width="1.2" opacity=".7"/>
  <path d="M17 11 L21 7 L27 8.5 L31 5.5 L37 7 L43 5.5 L48 8 L53 12 L36 14 Z" fill="#f8f9fa"/>
  <path d="M21.5 41.5 L36 46 L48.5 42 L48 43.5 L36 47.5 L22 43 Z" fill="#b9b0a6"/>
  <g fill="#1a78d6">
    <path d="M24.5 22.5 L28.5 20 L32 23 L30 24.5 L28.3 22.8 L26.2 24.2 Z"/>
    <path d="M32.5 25.5 L34.5 31 L30.5 33 L30 30.8 L32.2 30 L31 26.8 Z"/>
    <path d="M27.5 33.5 L22.5 32 L23 27 L25 28.2 L24.8 30.5 L28 31.2 Z"/>
  </g>
</svg>
<div class="lb" style="left:-25px;top:54px;transform:scaleX(.86)">Recycle Bin</div>
<!-- col2 row1 chrome netsuite -->
<svg class="a" style="left:84px;top:6px" width="42" height="42"><use href="#chrome"/></svg>
<svg class="a" style="left:82.5px;top:36.5px" width="13" height="13"><use href="#sc"/></svg>
<div class="lb" style="left:45px;top:54px;transform:scaleX(.9)">Netsuite</div>
<!-- col3 row1 firefox -->
<svg class="a" style="left:150px;top:0" width="50" height="50" viewBox="150 0 50 50">
  <defs>
    <radialGradient id="ffg" cx="0.35" cy="0.8" r="0.9"><stop offset="0" stop-color="#ff3750"/><stop offset=".35" stop-color="#ff5a2a"/><stop offset=".65" stop-color="#ff9a1a"/><stop offset="1" stop-color="#ffd026"/></radialGradient>
    <radialGradient id="ffp" cx="0.4" cy="0.3" r="0.8"><stop offset="0" stop-color="#b04ae8"/><stop offset="1" stop-color="#6a2ee0"/></radialGradient>
  </defs>
  <circle cx="175" cy="26" r="20" fill="url(#ffg)"/>
  <path d="M174 27 C172 14 178 8 181 5 C186 9 194 15 195 26 C195 30 194 33 193 35 Z" fill="#ffcc24"/>
  <circle cx="178" cy="25" r="10.5" fill="url(#ffp)"/>
  <path d="M156 24 C157 17 160 13 162 12 L163 16 C165 14 167 14 168 14 L167 18 C172 18 174 21 176 22 C170 23 164 21 160 22 C158 23 157 26 157 30 Z" fill="#ff8a1e"/>
  <path d="M160 21 C165 19 171 20 175 22 C170 24 164 23 160 23 Z" fill="#ffb830"/>
</svg>
<svg class="a" style="left:152.5px;top:36.5px" width="13" height="13"><use href="#sc"/></svg>
<div class="lb" style="left:115px;top:54px;transform:scaleX(.9)">Firefox</div>

<!-- row2 future studio -->
<svg class="a" style="left:15px;top:113px" width="40" height="30" viewBox="0 0 40 30">
  <rect x="0" y="0" width="40" height="30" fill="#f2f2f2" stroke="#bdbdbd" stroke-width=".8"/>
  <rect x="9" y="4.5" width="17" height="22.5" fill="#1677d8"/>
  <rect x="28" y="7" width="10" height="10" fill="#dcdcdc"/>
  <rect x="1.5" y="5" width="6" height="20" fill="#e6e6e6"/>
</svg>
<svg class="a" style="left:12.5px;top:138px" width="13" height="13"><use href="#sc"/></svg>
<div class="lb" style="left:-25px;top:155px;transform:scaleX(.9)">Future Studio</div>
<!-- teamviewer -->
<svg class="a" style="left:82.5px;top:105.5px" width="45" height="45" viewBox="0 0 45 45">
  <rect x="0" y="0" width="45" height="45" rx="2" fill="#0e74d9"/>
  <circle cx="23" cy="22.5" r="18.8" fill="#fff"/>
  <path d="M7.5 22.5 L16 14.5 L16 19.5 L30 19.5 L30 14.5 L38.5 22.5 L30 30.5 L30 25.5 L16 25.5 L16 30.5 Z" fill="#0e74d9"/>
</svg>
<svg class="a" style="left:82.5px;top:138px" width="13" height="13"><use href="#sc"/></svg>
<div class="lb" style="left:45px;top:155px;transform:scaleX(.9)">TeamViewer</div>

<!-- row3 chrome -->
<svg class="a" style="left:14px;top:208.5px" width="42" height="42"><use href="#chrome"/></svg>
<svg class="a" style="left:12.5px;top:239.5px" width="13" height="13"><use href="#sc"/></svg>
<div class="lb" style="left:-25px;top:256.5px;transform:scaleX(.93)">Google</div>
<div class="lb" style="left:-25px;top:272px;transform:scaleX(.92)">Chrome</div>
<!-- future self service -->
<svg class="a" style="left:82.5px;top:206.5px" width="45" height="45" viewBox="0 0 45 45">
  <rect width="45" height="45" fill="#000"/>
  <text x="22.5" y="24.5" text-anchor="middle" font-family="Liberation Sans" font-weight="bold" font-size="5" letter-spacing="1.6" fill="#fff">FUTURE</text>
  <path d="M1.5 14 V12 H3.5 M43.5 14 V12 H41.5 M1.5 31 V33 H3.5 M43.5 31 V33 H41.5" stroke="#d02020" stroke-width=".8" fill="none"/>
</svg>
<svg class="a" style="left:82.5px;top:239.5px" width="13" height="13"><use href="#sc"/></svg>
<div class="lb" style="left:45px;top:256.5px;transform:scaleX(.88)">Future Self</div>
<div class="lb" style="left:45px;top:272px;transform:scaleX(.88)">Service</div>
<!-- spotify -->
<svg class="a" style="left:153px;top:208px" width="44" height="44" viewBox="0 0 44 44">
  <circle cx="22" cy="22" r="21" fill="#1ed760"/>
  <path d="M10 15 C18 12 27 13 34 17 M11 22 C18 20 25 21 31 24 M12 28.5 C18 27 23 27.5 28 30" stroke="#191414" stroke-width="3.2" stroke-linecap="round" fill="none"/>
</svg>
<svg class="a" style="left:152.5px;top:239.5px" width="13" height="13"><use href="#sc"/></svg>
<div class="lb" style="left:115px;top:256.5px;transform:scaleX(.9)">Spotify</div>

<!-- row4 ringcentral -->
<svg class="a" style="left:12.5px;top:308px" width="45" height="45" viewBox="0 0 45 45">
  <rect width="45" height="45" rx="6" fill="#f58a00"/>
  <circle cx="22.7" cy="22.5" r="19" fill="#fff" stroke="#1a80c0" stroke-width="1.3"/>
  <path d="M14 12 C12 14 12.5 18 15 22 C18 27 22 31 27 33.5 C30 35 32.5 34 33.5 32.5 L30.5 28.5 C29.5 28 28 29 27 29.5 C24 28 20 24 18 20.5 C18.5 19 19.5 18 19 16.5 L16 12 C15.5 11.5 14.7 11.5 14 12 Z" fill="#1a80c0"/>
</svg>
<svg class="a" style="left:12.5px;top:340.5px" width="13" height="13"><use href="#sc"/></svg>
<div class="lb" style="left:-25px;top:357.5px;transform:scaleX(.92)">RingCentral</div>
<div class="lb" style="left:-25px;top:373px;transform:scaleX(.89)">Phone</div>
<!-- expressvpn -->
<svg class="a" style="left:82px;top:312px" width="46" height="38" viewBox="0 0 46 38">
  <path d="M15 0.5 H36 A9.5 9.5 0 0 1 36 19.5 H1 L3.5 13.5 H11.5 Z" fill="#da3740"/>
  <path d="M12.5 10.4 H36 A1 1 0 0 1 36 12.4 H11.8 Z" fill="#26509a"/>
  <path d="M8.5 25.5 H32.5 A5.75 5.75 0 0 1 32.5 37 H5 Z" fill="#da3740"/>
</svg>
<svg class="a" style="left:82.5px;top:340.5px" width="13" height="13"><use href="#sc"/></svg>
<div class="lb" style="left:45px;top:357.5px;transform:scaleX(.84)">ExpressVPN</div>
<!-- edge -->
<svg class="a" style="left:152px;top:309px" width="44" height="44" viewBox="0 0 44 44">
  <defs><linearGradient id="edg" x1="0" y1="0" x2="0" y2="1"><stop offset="0" stop-color="#35c1f1"/><stop offset="1" stop-color="#0c59a4"/></linearGradient></defs>
  <circle cx="22" cy="22" r="22" fill="url(#edg)"/>
  <circle cx="28" cy="26" r="11" fill="#0a4a90"/>
</svg>
<svg class="a" style="left:152.5px;top:340.5px" width="13" height="13"><use href="#sc"/></svg>
<div class="lb" style="left:115px;top:357.5px;transform:scaleX(.9)">Microsoft</div>
<div class="lb" style="left:115px;top:373px;transform:scaleX(.9)">Edge</div>

<!-- row5 concur chrome -->
<svg class="a" style="left:14px;top:410.5px" width="42" height="42"><use href="#chrome"/></svg>
<svg class="a" style="left:12.5px;top:442px" width="13" height="13"><use href="#sc"/></svg>
<div class="lb" style="left:-25px;top:459px;transform:scaleX(.93)">Concur</div>
<!-- vlc -->
<svg class="a" style="left:88px;top:409px" width="37" height="45" viewBox="0 0 37 45">
  <path d="M0.5 35 L3.5 28.5 H33 L36.5 35 C36.5 42 36 44 35 44 H2 C1 44 0.5 42 0.5 35 Z" fill="#f79a10"/>
  <path d="M14.5 1.5 C16 0 21 0 22.5 1.5 L31 36 C26 40 11 40 6 36 Z" fill="#f07c10"/>
  <path d="M12 11.5 C15 13 22 13 25 11.5 L26.5 18 C22 20 15 20 10.5 18 Z" fill="#e6e6e6"/>
  <path d="M9 22.5 C14 25 23 25 28 22.5 L29.5 29.5 C24 32 13 32 7.5 29.5 Z" fill="#e6e6e6"/>
</svg>
<svg class="a" style="left:82.5px;top:442px" width="13" height="13"><use href="#sc"/></svg>
<div class="lb" style="left:45px;top:459px;transform:scaleX(.86)">VLC media</div>
<div class="lb" style="left:45px;top:474px;transform:scaleX(.89)">player</div>

<!-- row6 docupeak chrome -->
<svg class="a" style="left:14px;top:512px" width="42" height="42"><use href="#chrome"/></svg>
<svg class="a" style="left:12.5px;top:543px" width="13" height="13"><use href="#sc"/></svg>
<div class="lb" style="left:-25px;top:559.5px;transform:scaleX(.95)">Docupeak</div>
<!-- paint.net -->
<svg class="a" style="left:84px;top:512px" width="42" height="43" viewBox="0 0 42 43">
  <defs><linearGradient id="pnsky" x1="0" y1="0" x2="1" y2="1"><stop offset="0" stop-color="#1848b0"/><stop offset=".5" stop-color="#6c9ee0"/><stop offset="1" stop-color="#2a5cb8"/></linearGradient></defs>
  <rect x="0" y="0" width="34" height="42.5" fill="#e8e8e8" stroke="#c4c4c4" stroke-width=".6"/>
  <rect x="2.2" y="2.2" width="29.5" height="32.5" fill="url(#pnsky)"/>
  <path d="M2.2 24 C8 21 14 23 20 22 C25 21 28 23 31.7 24 V28 H2.2 Z" fill="#f0f4fa"/>
  <rect x="2.2" y="28" width="29.5" height="6.7" fill="#1a2a50"/>
  <path d="M40 11.5 L14 33" stroke="#c8202a" stroke-width="2.4" stroke-linecap="round"/>
  <path d="M15 32 L11 37.5" stroke="#d8d8d8" stroke-width="3"/>
</svg>
<svg class="a" style="left:82.5px;top:543px" width="13" height="13"><use href="#sc"/></svg>
<div class="lb" style="left:45px;top:559.5px;transform:scaleX(.95)">paint.net</div>

<!-- WINDOW -->
<div id="win"></div>
<div id="wc">
<style>
#wc .t{color:#000;font-size:12px;line-height:12px;transform:scaleX(.925);transform-origin:0 0}
#wc .lk{color:#1f2d6e}
#wc .bl{color:#1a6cd6}
#wc .h15{font-size:15px;line-height:15px;transform:scaleX(.975)}
#wc .r{transform-origin:100% 0}
</style>
<!-- title -->
<svg class="a" style="left:180px;top:33px" width="17" height="15" viewBox="0 0 17 15">
  <line x1="1.5" y1="1" x2="5" y2="14" stroke="#8a8a8a" stroke-width="1.2"/>
  <path d="M2 1.5 C5 0 7 3 10 2 C12 1.3 14 1.5 16 3 L13.5 7 C11 6 9 7 7 8 C5.5 8.7 4.5 8 3.5 7.5 Z" fill="#3a56c8"/>
  <path d="M4 3 C6 2.5 8 4 10 3.5 L9 6 C7 6.5 5.5 6.5 4.5 6 Z" fill="#6d88e6"/>
</svg>
<div class="t" style="left:198px;top:35px;transform:scaleX(.908)">Security and Maintenance</div>
<!-- window buttons -->
<div class="a" style="left:796px;top:40px;width:10px;height:1px;background:#333"></div>
<div class="a" style="left:839px;top:35px;width:10px;height:10px;border:1px solid #333"></div>
<svg class="a" style="left:883px;top:35px" width="11" height="11" viewBox="0 0 11 11"><path d="M0.5 0.5 L10.5 10.5 M10.5 0.5 L0.5 10.5" stroke="#333" stroke-width="1.1"/></svg>
<!-- nav arrows -->
<svg class="a" style="left:184px;top:65px" width="16" height="15" viewBox="0 0 16 15"><path d="M1.5 7.5 H14.5 M1.5 7.5 L7.5 1.5 M1.5 7.5 L7.5 13.5" stroke="#555" stroke-width="1.3" fill="none"/></svg>
<svg class="a" style="left:213px;top:65px" width="16" height="15" viewBox="0 0 16 15"><path d="M1 7.5 H13.5 M13.5 7.5 L7.5 1.5 M13.5 7.5 L7.5 13.5" stroke="#c4c4c4" stroke-width="1.3" fill="none"/></svg>
<svg class="a" style="left:237px;top:68px" width="9" height="8" viewBox="0 0 9 8"><path d="M1.5 2 L4.5 5 L7.5 2" stroke="#555" stroke-width="1.3" fill="none"/></svg>
<svg class="a" style="left:253px;top:66px" width="15" height="15" viewBox="0 0 15 15"><path d="M7.5 1.5 V14 M7.5 1.5 L1.8 7.2 M7.5 1.5 L13.2 7.2" stroke="#555" stroke-width="1.3" fill="none"/></svg>
<!-- address box -->
<div class="a" style="left:272px;top:57px;width:215px;height:30px;border:1px solid #d9d9d9"></div>
<div class="a" style="left:455px;top:58px;width:1px;height:28px;background:#d9d9d9"></div>
<svg class="a" style="left:273px;top:64px" width="17" height="16" viewBox="0 0 17 16">
  <line x1="1.5" y1="1" x2="5" y2="15" stroke="#8a8a8a" stroke-width="1.2"/>
  <path d="M2 1.5 C5 0 7 3 10 2 C12 1.3 14 1.5 16 3 L13.5 7 C11 6 9 7 7 8 C5.5 8.7 4.5 8 3.5 7.5 Z" fill="#3a56c8"/>
  <path d="M4 3 C6 2.5 8 4 10 3.5 L9 6 C7 6.5 5.5 6.5 4.5 6 Z" fill="#6d88e6"/>
</svg>
<div class="t" style="left:295px;top:67px;color:#777;font-size:10px">«</div>
<div class="t" style="left:307px;top:67px">All ...</div>
<svg class="a" style="left:336px;top:68px" width="8" height="10" viewBox="0 0 8 10"><path d="M2 1.5 L5.5 5 L2 8.5" stroke="#555" stroke-width="1.2" fill="none"/></svg>
<div class="t" style="left:349.5px;top:67px">Securi...</div>
<svg class="a" style="left:434px;top:68px" width="12" height="9" viewBox="0 0 12 9"><path d="M2.2 2.4 L6 6.2 L9.8 2.4" stroke="#505050" stroke-width="1.6" fill="none"/></svg>
<svg class="a" style="left:464px;top:65px" width="14" height="14" viewBox="0 0 14 14"><path d="M5.4 2.8 A4.8 4.8 0 1 1 2.4 8.6" stroke="#505050" stroke-width="1.6" fill="none"/><path d="M2.4 1.6 L7 2.4 L3.2 6.2 Z" fill="#505050"/></svg>
<!-- search -->
<div class="a" style="left:494px;top:57px;width:414px;height:30px;border:1px solid #d9d9d9"></div>
<div class="t" style="left:500.5px;top:67.5px;color:#6d6d6d;transform:scaleX(.897)">Search Control Panel</div>
<svg class="a" style="left:887px;top:67px" width="12" height="12" viewBox="0 0 12 12"><circle cx="7.3" cy="4.7" r="3.3" stroke="#444" stroke-width="1.3" fill="none"/><path d="M5 7 L1 11" stroke="#444" stroke-width="1.6"/></svg>
<!-- menu -->
<div class="t" style="left:179.5px;top:96px">File</div>
<div class="t" style="left:205.7px;top:96px">Edit</div>
<div class="t" style="left:234.3px;top:96px">View</div>
<div class="t" style="left:267.5px;top:96px">Tools</div>
<div class="a" style="left:175px;top:110px;width:734px;height:1px;background:#e8e8e8"></div>
<!-- left pane -->
<div class="t lk" style="left:200.7px;top:126px">Control Panel Home</div>
<div class="t lk" style="left:200.7px;top:161px">Change Security and</div>
<div class="t lk" style="left:200.7px;top:176px">Maintenance settings</div>
<svg class="a" style="left:180px;top:196px" width="14" height="16" viewBox="0 0 14 16">
  <path d="M7 0.5 C9 1.8 11 2.3 13.5 2.3 C13.5 9 11.5 13 7 15.5 C2.5 13 0.5 9 0.5 2.3 C3 2.3 5 1.8 7 0.5 Z" fill="#f3b600" stroke="#4a4a4a" stroke-width=".6"/>
  <path d="M7 0.8 C5 2 3 2.5 0.8 2.5 C0.8 5 1 6.5 1.4 7.8 H7 Z" fill="#1d6fd6"/>
  <path d="M7 7.8 H12.6 C11.8 11 10 13.5 7 15.2 Z" fill="#1d6fd6"/>
</svg>
<div class="t lk" style="left:200.7px;top:199.5px">Change User Account Control</div>
<div class="t lk" style="left:200.7px;top:215px">settings</div>
<div class="t lk" style="left:200.7px;top:238px">View archived messages</div>
<div class="t" style="left:200.7px;top:488.5px;color:#7a7a7a">See also</div>
<div class="t lk" style="left:200.7px;top:511px">File History</div>
<div class="t lk" style="left:200.7px;top:534px">Windows Program</div>
<div class="t lk" style="left:200.7px;top:550px;transform:scaleX(.94)">Compatibility Troubleshooter</div>
<!-- main -->
<div class="t h15" style="left:385px;top:131px;color:#1c3aa9;transform:scaleX(.983)">Review recent messages and resolve problems</div>
<div class="t" style="left:385px;top:157.5px;transform:scaleX(.916)">No issues have been detected by Security and Maintenance.</div>
<div class="a" style="left:386px;top:191px;width:483px;height:1px;background:#c8c8c8"></div>
<div class="t h15 bl" style="left:397px;top:202px;transform:scaleX(.99)">Security</div>
<svg class="a" style="left:839px;top:198px" width="20" height="20" viewBox="0 0 20 20"><circle cx="10" cy="10" r="9" stroke="#a8a8a8" stroke-width="1" fill="none"/><path d="M6 8.5 L10 12.5 L14 8.5" stroke="#8a8a8a" stroke-width="1.1" fill="none"/></svg>
<div class="a" style="left:386px;top:226px;width:483px;height:1px;background:#c8c8c8"></div>
<div class="t h15 bl" style="left:397px;top:237px;transform:scaleX(.995)">Maintenance</div>
<svg class="a" style="left:839px;top:233px" width="20" height="20" viewBox="0 0 20 20"><circle cx="10" cy="10" r="9" stroke="#a8a8a8" stroke-width="1" fill="none"/><path d="M6 11.5 L10 7.5 L14 11.5" stroke="#8a8a8a" stroke-width="1.1" fill="none"/></svg>

<div class="t" style="left:396.5px;top:273px">Report problems</div>
<div class="t r" style="left:626.5px;width:100px;text-align:right;top:273px">On</div>
<div class="t bl" style="left:416.3px;top:295px">View reliability history</div>

<div class="t" style="left:396.5px;top:329.5px">Automatic Maintenance</div>
<div class="t r" style="left:626px;width:100px;text-align:right;top:329.5px">No action needed</div>
<div class="t" style="left:415.3px;top:352px;transform:scaleX(.935)">Last run date: 07/07/2021 09:53</div>
<div class="t" style="left:415.3px;top:367.5px;transform:scaleX(.934)">Windows automatically schedules maintenance activities to run on your computer.</div>
<svg class="a" style="left:416px;top:387px" width="15" height="16" viewBox="0 0 14 16">
  <path d="M7 0.5 C9 1.8 11 2.3 13.5 2.3 C13.5 9 11.5 13 7 15.5 C2.5 13 0.5 9 0.5 2.3 C3 2.3 5 1.8 7 0.5 Z" fill="#f3b600" stroke="#4a4a4a" stroke-width=".6"/>
  <path d="M7 0.8 C5 2 3 2.5 0.8 2.5 C0.8 5 1 6.5 1.4 7.8 H7 Z" fill="#1d6fd6"/>
  <path d="M7 7.8 H12.6 C11.8 11 10 13.5 7 15.2 Z" fill="#1d6fd6"/>
</svg>
<div class="t bl" style="left:434.8px;top:390px">Start maintenance</div>
<div class="a" style="left:529px;top:390px;width:1px;height:12px;background:#555"></div>
<div class="t bl" style="left:535.3px;top:390px">Change maintenance settings</div>

<div class="t" style="left:396.5px;top:424.5px">File History</div>
<div class="t r" style="left:626.5px;width:100px;text-align:right;top:424.5px">Off</div>
<div class="t" style="left:415.3px;top:447px;transform:scaleX(.95)">File History is off.</div>
<div class="t bl" style="left:415.8px;top:469px">Turn on</div>

<div class="t" style="left:396.5px;top:504px">Drive status</div>
<div class="t r" style="left:626.5px;width:100px;text-align:right;top:504px">OK</div>
<div class="t" style="left:415.3px;top:526.5px;transform:scaleX(.953)">All drives are working properly.</div>

<div class="t" style="left:396.5px;top:561px">Device software</div>
<div class="t r" style="left:626px;width:100px;text-align:right;top:561px">No action needed</div>

<!-- help -->
<svg class="a" style="left:878px;top:111px" width="15" height="15" viewBox="0 0 15 15"><circle cx="7.3" cy="7.8" r="6.6" fill="#0a62c8" stroke="#0a4aa0" stroke-width=".5"/><text x="7.3" y="11.8" text-anchor="middle" font-family="Liberation Sans" font-weight="bold" font-size="10" fill="#f4f8ff">?</text></svg>
<!-- scrollbar -->
<div class="a" style="left:894px;top:111px;width:16px;height:471px;background:#f0f0f0"></div>
<div class="a" style="left:894px;top:127px;width:16px;height:320px;background:#cdcdcd"></div>
<svg class="a" style="left:897px;top:115px" width="10" height="10" viewBox="0 0 10 10"><path d="M1.5 6.5 L5 3 L8.5 6.5" stroke="#555" stroke-width="1.5" fill="none"/></svg>
<svg class="a" style="left:897px;top:568px" width="10" height="10" viewBox="0 0 10 10"><path d="M1.5 3.5 L5 7 L8.5 3.5" stroke="#555" stroke-width="1.5" fill="none"/></svg>
</div>

<!-- TASKBAR -->
<div class="a" style="left:0;top:637px;width:1200px;height:38px;background:linear-gradient(90deg,#1f2434 0,#212538 360px,#22233a 645px,#38202a 690px,#3a1e26 800px,#3b1d26 1200px)"></div>
<svg class="a" style="left:15px;top:648px" width="16" height="16" viewBox="0 0 16 16"><path d="M0 2.2 L6.6 1.3 V7.5 H0 Z M7.4 1.2 L16 0 V7.5 H7.4 Z M0 8.3 H6.6 V14.7 L0 13.8 Z M7.4 8.3 H16 V16 L7.4 14.8 Z" fill="#fff"/></svg>
<div class="a" style="left:45px;top:638px;width:322px;height:37px;background:#f0f0f0"></div>
<svg class="a" style="left:55px;top:648px" width="18" height="17" viewBox="0 0 18 17"><circle cx="11" cy="6.5" r="5.3" stroke="#1a1a1a" stroke-width="1.4" fill="none"/><path d="M7.2 10.3 L1 16.5" stroke="#1a1a1a" stroke-width="1.5"/></svg>
<div class="t" style="left:82px;top:650px;font-size:15px;line-height:15px;color:#1e1e1e;transform:scaleX(.926);transform-origin:0 0">Type here to search</div>
<!-- cortana -->
<div class="a" style="left:382.5px;top:649px;width:15px;height:15px;border:2px solid #fff;border-radius:50%"></div>
<!-- task view -->
<svg class="a" style="left:426px;top:648px" width="17" height="15" viewBox="0 0 17 15">
  <path d="M1 1 H11 M1 14 H11" stroke="#ddd" stroke-width="1.2"/>
  <rect x="2" y="3.5" width="8" height="8" fill="none" stroke="#ddd" stroke-width="1.2"/>
  <path d="M15.5 0.5 V14.5" stroke="#ddd" stroke-width="1"/>
  <circle cx="15.5" cy="6" r="1.2" fill="#fff"/>
</svg>
<!-- explorer -->
<svg class="a" style="left:472.5px;top:647.5px" width="21" height="17" viewBox="0 0 21 17">
  <path d="M0 1 C0 .4 .4 0 1 0 H7 L9 2 H20 C20.6 2 21 2.4 21 3 V16 C21 16.6 20.6 17 20 17 H1 C.4 17 0 16.6 0 16 Z" fill="#e8b020"/>
  <rect x="0" y="4" width="21" height="13" rx="1" fill="#fcd560"/>
  <path d="M4.5 16.5 V9.5 H16.5 V16.5 H13.5 V12 H7.5 V16.5 Z" fill="#2a8ee0"/>
</svg>
<!-- chrome -->
<svg class="a" style="left:519.5px;top:645.5px" width="21.5" height="21.5" viewBox="0 0 42 42"><use href="#chrome"/></svg>
<div class="a" style="left:511px;top:672px;width:30px;height:3px;background:#76b9ed"></div>
<div class="a" style="left:541px;top:672px;width:8px;height:3px;background:#5a8ab8"></div>
<!-- expressvpn -->
<svg class="a" style="left:565.5px;top:647px" width="23" height="19" viewBox="0 0 46 38">
  <path d="M15 0.5 H36 A9.5 9.5 0 0 1 36 19.5 H1 L3.5 13.5 H11.5 Z" fill="#da3740"/>
  <path d="M12.5 10 H36 A1.4 1.4 0 0 1 36 12.8 H11.8 Z" fill="#22233a"/>
  <path d="M8.5 25 H32.5 A6 6 0 0 1 32.5 37 H5 Z" fill="#da3740"/>
</svg>
<!-- spotify -->
<svg class="a" style="left:613px;top:645.5px" width="21.5" height="21.5" viewBox="0 0 44 44">
  <circle cx="22" cy="22" r="21.5" fill="#1ed760"/>
  <path d="M10 15 C18 12 27 13 34 17 M11 22 C18 20 25 21 31 24 M12 28.5 C18 27 23 27.5 28 30" stroke="#191414" stroke-width="3.4" stroke-linecap="round" fill="none"/>
</svg>
<div class="a" style="left:605px;top:672px;width:38px;height:3px;background:#76b9ed"></div>
<!-- active control panel -->
<div class="a" style="left:648px;top:637px;width:46px;height:38px;background:#4f4b56"></div>
<svg class="a" style="left:660px;top:649px" width="21" height="14" viewBox="0 0 21 14">
  <rect x="0" y="0" width="21" height="14" fill="#7ccaf0"/>
  <rect x="1" y="1" width="19" height="12" fill="#2aa0e0"/>
  <rect x="1.5" y="1.5" width="18" height="11" fill="#5cc0ee"/>
  <circle cx="6" cy="7" r="3.5" fill="#fff"/>
  <path d="M6 7 V3.5 A3.5 3.5 0 0 1 9.5 7 Z" fill="#f0a020"/>
  <path d="M11.5 4 H18 M11.5 6.5 H18 M11.5 9 H18" stroke="#e8f6fc" stroke-width="1"/>
</svg>
<div class="a" style="left:648px;top:672px;width:46px;height:3px;background:#86c2ef"></div>
<!-- tray -->
<svg class="a" style="left:993px;top:652px" width="14" height="8" viewBox="0 0 14 8"><path d="M1 7 L7 1 L13 7" stroke="#e0e0e0" stroke-width="1.3" fill="none"/></svg>
<svg class="a" style="left:1014px;top:650px" width="17" height="11" viewBox="0 0 17 11">
  <rect x="4" y="3" width="12.5" height="7.5" fill="none" stroke="#e8e8e8" stroke-width="1"/>
  <rect x="5.5" y="4.5" width="9.5" height="4.5" fill="#e8e8e8"/>
  <path d="M1 1 V4 H4 V1 M2.5 4 V6.5 H4" stroke="#e8e8e8" stroke-width="1" fill="none"/>
</svg>
<svg class="a" style="left:1040px;top:650px" width="13" height="12" viewBox="0 0 13 12">
  <path d="M1 11.5 C1 5.5 5.5 1 11.5 1 M3.5 11.5 C3.5 7 7 3.5 11.5 3.5 M6 11.5 C6 8.5 8.5 6 11.5 6" stroke="#bbb" stroke-width="1" fill="none"/>
  <circle cx="10" cy="10" r="1.4" fill="#f0f0f0"/>
</svg>
<svg class="a" style="left:1059px;top:650px" width="17" height="12" viewBox="0 0 17 12">
  <path d="M1 4 H4 L8.5 0.8 V11.2 L4 8 H1 Z" fill="none" stroke="#e8e8e8" stroke-width="1"/>
  <path d="M10.5 3.5 C11.8 5 11.8 7 10.5 8.5 M12.5 2 C14.5 4.5 14.5 7.5 12.5 10 M14.5 0.8 C17.2 4 17.2 8 14.5 11.2" stroke="#e8e8e8" stroke-width="1" fill="none"/>
</svg>
<div class="t" style="left:1078.5px;top:642px;width:72px;text-align:center;color:#e8e8e8;font-size:12px;line-height:12px;transform:scaleX(.9);transform-origin:50% 0">10:55</div>
<div class="t" style="left:1084px;top:659px;color:#e8e8e8;font-size:12px;line-height:12px;transform:scaleX(.96);transform-origin:0 0">07/07/2021</div>
<svg class="a" style="left:1160px;top:648px" width="26" height="24" viewBox="0 0 26 24">
  <path d="M1 1 H17 V13 H7 L3.5 16 V13 H1 Z" fill="#f4f4f4"/>
  <path d="M4 4.5 H14 M4 7 H14 M4 9.5 H14" stroke="#888" stroke-width=".9"/>
  <circle cx="16" cy="14.5" r="8.5" fill="#3c3c3c" stroke="#d8d8d8" stroke-width="1"/>
  <text x="16" y="18.3" text-anchor="middle" font-family="Liberation Sans" font-size="10.5" fill="#fff">21</text>
</svg>
<div class="a" style="left:1195px;top:637px;width:1px;height:38px;background:#6a5058"></div>

</body></html>
